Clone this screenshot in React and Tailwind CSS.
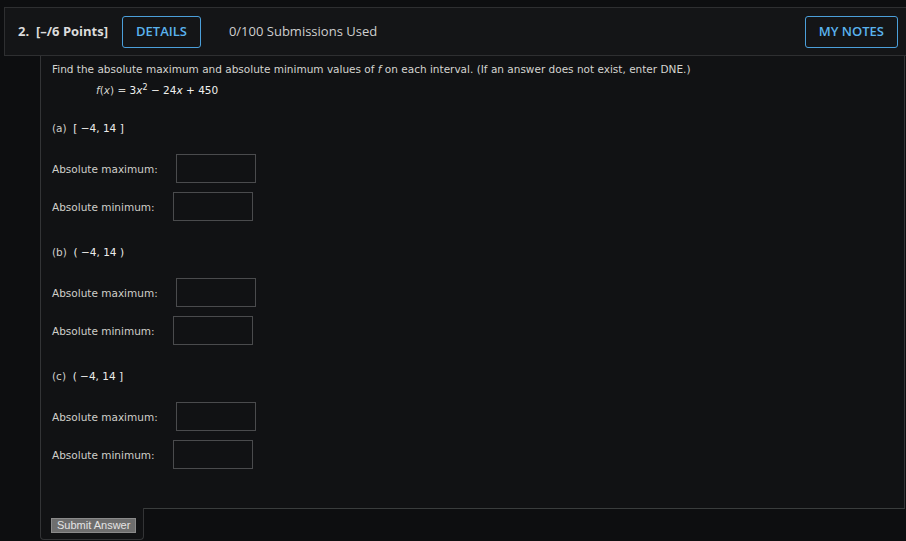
import React from 'react';

const body = { fontFamily: '"DejaVu Sans", Verdana, sans-serif' };

function AnswerRow({ label, mt }) {
  return (
    <div className={`flex items-center ${mt}`}>
      <span className="text-[10.5px] leading-[14px] text-[#cfcfca]">{label}</span>
      <input
        type="text"
        className="ml-[18px] h-[29px] w-[80px] border border-[#4a4b4d] bg-transparent outline-none"
      />
    </div>
  );
}

function Part({ letter, open, close }) {
  return (
    <div className="mt-[24px]">
      <div className="text-[10.5px] leading-[14px] text-[#cfcfca]">
        ({letter})&nbsp; <span className="text-[#ececea]">{open} −4, 14 {close}</span>
      </div>
      <AnswerRow label="Absolute maximum:" mt="mt-[19px]" />
      <AnswerRow label="Absolute minimum:" mt="mt-[9px]" />
    </div>
  );
}

export default function App() {
  return (
    <div className="h-[541px] w-[906px] overflow-hidden bg-[#0d0e10]" style={body}>
      <div className="pt-[7px] pl-[4px]">
        {/* header */}
        <div
          className="flex h-[49px] items-center border border-r-0 border-[#2e2f31] bg-[#141517] pr-[8px] pl-[13px] text-[13px]"
          style={{ fontFamily: '"Open Sans", sans-serif' }}
        >
          <span className="font-bold text-[#dcdcdc]">2.&nbsp; [–/6 Points]</span>
          <button className="ml-[14px] h-[32px] rounded-[3px] border border-[#4b9fda] px-[13px] font-semibold text-[#5ab3ee]">
            DETAILS
          </button>
          <span className="ml-[28px] text-[#cfcfcf]">0/100 Submissions Used</span>
          <button className="ml-auto h-[32px] rounded-[3px] border border-[#4b9fda] px-[13px] font-semibold text-[#5ab3ee]">
            MY NOTES
          </button>
        </div>

        {/* question panel */}
        <div className="ml-[36px] mr-[1px] h-[452px] border-x border-[#333436] bg-[#111214] pt-[6px] pl-[11px]">
          <p className="text-[10.5px] leading-[14px] text-[#d4d4d0]">
            Find the absolute maximum and absolute minimum values of <i>f</i> on each interval. (If an
            answer does not exist, enter DNE.)
          </p>
          <p className="mt-[7px] ml-[44px] text-[10.5px] leading-[14px] text-[#d4d4d0]">
            <i>f</i>(<i>x</i>) ={' '}
            <span className="text-[#f0f0ee]">
              3<i>x</i>
              <sup className="text-[8px]">2</sup> − 24<i>x</i> + 450
            </span>
          </p>
          <Part letter="a" open="[" close="]" />
          <Part letter="b" open="(" close=")" />
          <Part letter="c" open="(" close="]" />
        </div>

        <div className="ml-[36px] flex">
          <div className="flex h-[32px] w-[104px] items-start rounded-b-[4px] border-x border-b border-[#333436] bg-[#111214] pt-[10px] pl-[10px]">
            <button
              className="border border-[#8a8a8a] bg-[#6e6e6e] px-[5px] text-[11px] leading-[13px] text-[#e4e4e4]"
              style={{ fontFamily: '"Liberation Sans", Arial, sans-serif' }}
            >
              Submit Answer
            </button>
          </div>
          <div className="mr-[1px] h-px flex-1 bg-[#3a3d3d]" />
        </div>
      </div>
    </div>
  );
}
